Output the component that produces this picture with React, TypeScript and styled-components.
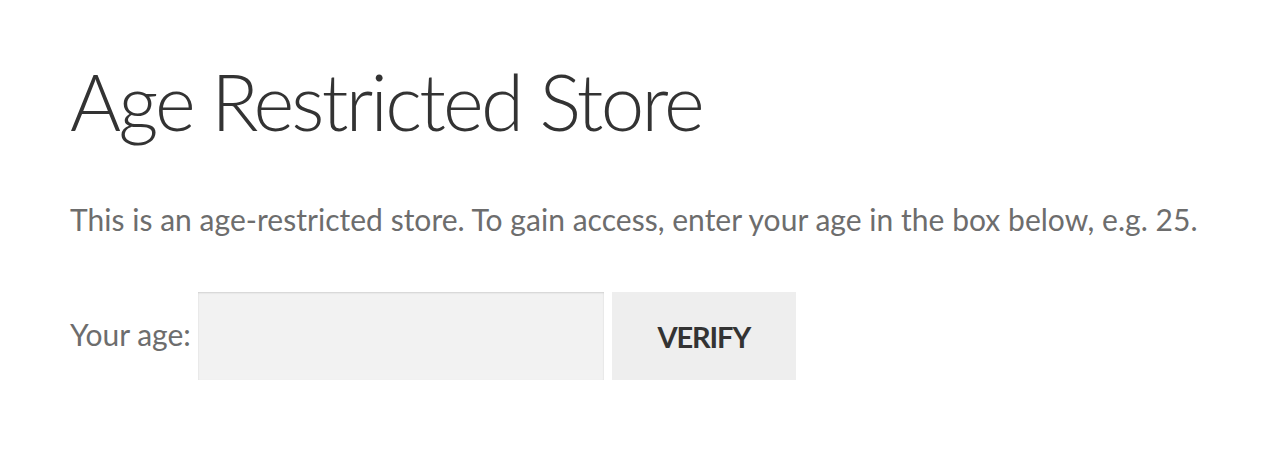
import React from 'react';
import styled, { createGlobalStyle } from 'styled-components';

const GlobalStyle = createGlobalStyle`
  * { box-sizing: border-box; }
  body {
    margin: 0;
    background: #ffffff;
    font-family: Lato, "Open Sans", sans-serif;
    color: #6d6d6d;
  }
`;

const Page = styled.main`
  padding: 54px 70px 0;
`;

const Title = styled.h1`
  margin: 0;
  font-size: 78px;
  line-height: 94px;
  font-weight: 300;
  letter-spacing: -2.75px;
  color: #333333;
`;

const Intro = styled.p`
  margin: 51px 0 0;
  font-size: 30px;
  line-height: 40px;
  font-weight: 400;
  letter-spacing: 0.03px;
`;

const AgeForm = styled.form`
  display: flex;
  align-items: center;
  margin-top: 53px;
`;

const Label = styled.label`
  font-size: 30px;
  line-height: 40px;
  margin: 0 7px 5px 0;
`;

const AgeInput = styled.input`
  width: 406px;
  height: 88px;
  border: 0;
  padding: 0 20px;
  background: #f2f2f2;
  box-shadow: inset 0 1px 2px rgba(0, 0, 0, 0.14);
  font: inherit;
  font-size: 30px;
  color: #43454b;
  outline: none;
`;

const VerifyButton = styled.button`
  width: 184px;
  height: 88px;
  margin-left: 8px;
  border: 0;
  background: #eeeeee;
  color: #333333;
  font-family: Lato, "Open Sans", sans-serif;
  font-size: 29px;
  font-weight: 700;
  letter-spacing: -1.1px;
  cursor: pointer;
`;

export default function App() {
  return (
    <>
      <GlobalStyle />
      <Page>
        <Title>Age Restricted Store</Title>
        <Intro>
          This is an age-restricted store. To gain access, enter your age in the box below, e.g. 25.
        </Intro>
        <AgeForm onSubmit={(e) => e.preventDefault()}>
          <Label htmlFor="age">Your age:</Label>
          <AgeInput id="age" type="text" />
          <VerifyButton type="submit">VERIFY</VerifyButton>
        </AgeForm>
      </Page>
    </>
  );
}
